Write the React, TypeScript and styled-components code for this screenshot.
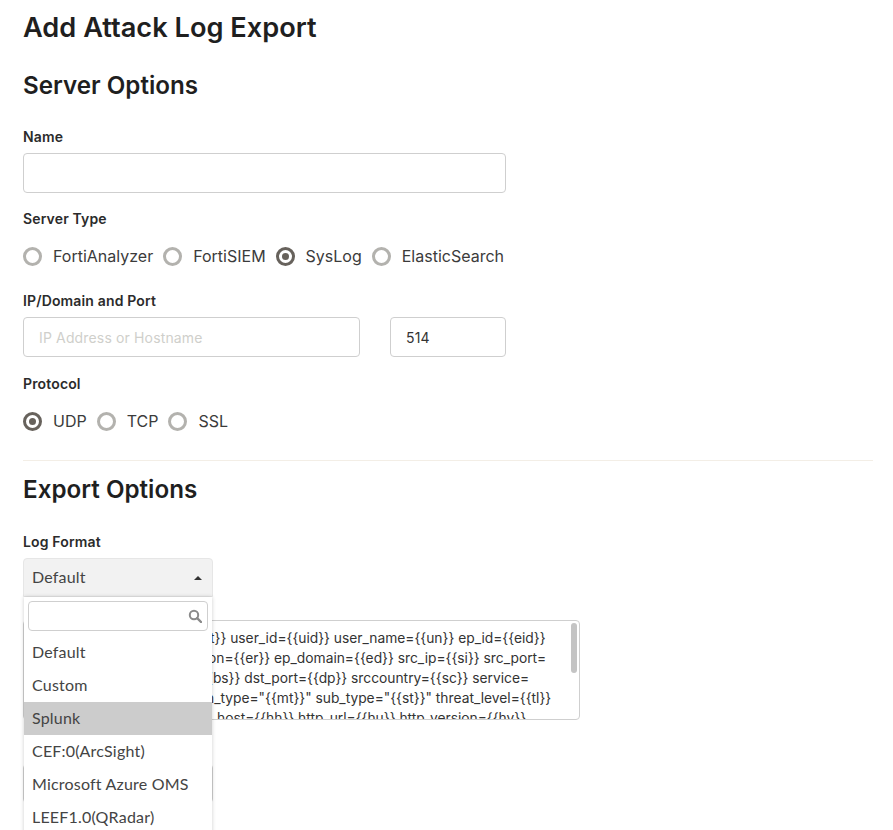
import React from 'react';
import styled, { createGlobalStyle } from 'styled-components';

const GlobalStyle = createGlobalStyle`
  html, body {
    margin: 0;
    padding: 0;
    height: 830px;
    overflow: hidden;
    background: #fff;
  }
  body {
    font-family: Inter, "Liberation Sans", sans-serif;
    color: #1f1f1f;
  }
`;

const Page = styled.main`
  padding: 10px 20px 0 23px;
`;

const Title = styled.h1`
  margin: 0;
  font-size: 27.2px;
  line-height: 36px;
  font-weight: 600;
  color: #1f1f1f;
`;

const SectionTitle = styled.h2<{ $top: number }>`
  margin: ${(p) => p.$top}px 0 0;
  font-size: 24.2px;
  line-height: 32px;
  font-weight: 600;
  color: #1f1f1f;
`;

const Label = styled.label<{ $top: number }>`
  display: block;
  margin-top: ${(p) => p.$top}px;
  font-size: 14px;
  line-height: 20px;
  font-weight: 600;
  letter-spacing: 0.15px;
  color: #2b2b2b;
`;

const TextInput = styled.input<{ $width: number }>`
  display: block;
  box-sizing: border-box;
  width: ${(p) => p.$width}px;
  height: 40px;
  padding: 0 15px;
  border: 1px solid #cfcfcf;
  border-radius: 4px;
  outline: none;
  background: #fff;
  font: 400 14px Inter, sans-serif;
  letter-spacing: 0.15px;
  color: #333;

  &::placeholder {
    color: #cfcfcb;
    opacity: 1;
  }
`;

const FieldSlot = styled.div`
  margin-top: 6px;
`;

const InputRow = styled(FieldSlot)`
  display: flex;
  gap: 30px;
`;

const RadioGroup = styled.div`
  display: flex;
  align-items: center;
  gap: 10px;
  margin-top: 17px;
`;

const RadioItem = styled.span`
  display: flex;
  align-items: center;
  gap: 11px;
  font-size: 16px;
  line-height: 20px;
  color: #3b3b3b;
`;

const RadioMark = styled.i<{ $checked?: boolean }>`
  box-sizing: border-box;
  display: grid;
  place-items: center;
  width: 19px;
  height: 19px;
  border-radius: 50%;
  border: 3px solid ${(p) => (p.$checked ? '#67625c' : '#b3b2ae')};

  &::after {
    content: '';
    display: ${(p) => (p.$checked ? 'block' : 'none')};
    width: 7px;
    height: 7px;
    border-radius: 50%;
    background: #67625c;
  }
`;

const Divider = styled.hr`
  margin: 29px 0 0;
  border: 0;
  border-top: 1px solid #f3eee6;
`;

const SelectWrap = styled.div`
  position: relative;
  width: 190px;
  margin-top: 6px;
`;

const SelectBox = styled.div`
  box-sizing: border-box;
  display: flex;
  align-items: center;
  justify-content: space-between;
  height: 39px;
  padding: 0 10px 2px 8px;
  border: 1px solid #e6e6e6;
  border-radius: 4px 4px 0 0;
  background: #f2f2f2;
  font: 400 16px Lato, sans-serif;
  letter-spacing: 0.2px;
  color: #444;
`;

const Caret = styled.i`
  width: 0;
  height: 0;
  margin-top: 2px;
  border-left: 4px solid transparent;
  border-right: 4px solid transparent;
  border-bottom: 4px solid #333;
`;

const Dropdown = styled.div`
  position: absolute;
  z-index: 2;
  top: 39px;
  left: 1px;
  width: 188px;
  height: 240px;
  overflow: hidden;
  background: #fff;
  box-shadow: 0 0 4px rgba(0, 0, 0, 0.2);
`;

const SearchBox = styled.div`
  box-sizing: border-box;
  display: flex;
  align-items: center;
  justify-content: flex-end;
  height: 30px;
  margin: 4px 4px 5px;
  padding-right: 5px;
  border: 1px solid #cfcfcf;
  border-radius: 4px;
  color: #8a8a8a;
`;

const Option = styled.div<{ $active?: boolean }>`
  box-sizing: border-box;
  height: 33px;
  padding: 0 8px 2px;
  display: flex;
  align-items: center;
  font: 400 16px Lato, sans-serif;
  letter-spacing: 0.2px;
  color: #444;
  background: ${(p) => (p.$active ? '#cccccc' : 'transparent')};
`;

const FormatBox = styled.div`
  box-sizing: border-box;
  position: relative;
  width: 557px;
  height: 100px;
  margin-top: 23px;
  padding-top: 7px;
  overflow: hidden;
  border: 1px solid #cfcfcf;
  border-radius: 4px;
  font-size: 13.8px;
  line-height: 20px;
  color: #333;
`;

const FormatLine = styled.div<{ $indent: number }>`
  padding-left: ${(p) => p.$indent}px;
  white-space: nowrap;
`;

const Thumb = styled.i`
  position: absolute;
  top: 2px;
  right: 2px;
  width: 6px;
  height: 50px;
  border-radius: 3px;
  background: #c4c4c4;
`;

const NextSelect = styled.div`
  box-sizing: border-box;
  width: 190px;
  height: 39px;
  margin-top: 44px;
  border: 1px solid #cfcfcf;
  border-radius: 4px;
`;

const SearchIcon = () => (
  <svg width="14" height="14" viewBox="0 0 14 14" fill="none" stroke="currentColor" aria-hidden>
    <circle cx="6" cy="6" r="4.2" strokeWidth="2" />
    <path d="M9.2 9.2 13 13" strokeWidth="2.4" strokeLinecap="round" />
  </svg>
);

const serverTypes = ['FortiAnalyzer', 'FortiSIEM', 'SysLog', 'ElasticSearch'];
const protocols = ['UDP', 'TCP', 'SSL'];
const formats = ['Default', 'Custom', 'Splunk', 'CEF:0(ArcSight)', 'Microsoft Azure OMS', 'LEEF1.0(QRadar)'];
const formatLines = [
  { indent: 186, text: 't}} user_id={{uid}} user_name={{un}} ep_id={{eid}}' },
  { indent: 184, text: 'on={{er}} ep_domain={{ed}} src_ip={{si}} src_port=' },
  { indent: 183, text: '{bs}} dst_port={{dp}} srccountry={{sc}} service=' },
  { indent: 182, text: 'n_type="{{mt}}" sub_type="{{st}}" threat_level={{tl}}' },
  { indent: 193, text: 'host={{hh}} http_url={{hu}} http_version={{hv}}' },
];

const App: React.FC = () => {
  return (
    <Page>
      <GlobalStyle />
      <Title>Add Attack Log Export</Title>

      <SectionTitle $top={24}>Server Options</SectionTitle>
      <Label $top={25}>Name</Label>
      <FieldSlot>
        <TextInput $width={483} />
      </FieldSlot>

      <Label $top={16}>Server Type</Label>
      <RadioGroup>
        {serverTypes.map((name) => (
          <RadioItem key={name}>
            <RadioMark $checked={name === 'SysLog'} />
            {name}
          </RadioItem>
        ))}
      </RadioGroup>

      <Label $top={25}>IP/Domain and Port</Label>
      <InputRow>
        <TextInput $width={337} placeholder="IP Address or Hostname" />
        <TextInput $width={116} defaultValue="514" />
      </InputRow>

      <Label $top={17}>Protocol</Label>
      <RadioGroup>
        {protocols.map((name) => (
          <RadioItem key={name}>
            <RadioMark $checked={name === 'UDP'} />
            {name}
          </RadioItem>
        ))}
      </RadioGroup>

      <Divider />

      <SectionTitle $top={13}>Export Options</SectionTitle>
      <Label $top={26}>Log Format</Label>
      <SelectWrap>
        <SelectBox>
          Default
          <Caret />
        </SelectBox>
        <Dropdown>
          <SearchBox>
            <SearchIcon />
          </SearchBox>
          {formats.map((name) => (
            <Option key={name} $active={name === 'Splunk'}>
              {name}
            </Option>
          ))}
        </Dropdown>
      </SelectWrap>

      <FormatBox>
        {formatLines.map((line) => (
          <FormatLine key={line.text} $indent={line.indent}>
            {line.text}
          </FormatLine>
        ))}
        <Thumb />
      </FormatBox>
      <NextSelect />
    </Page>
  );
};

export default App;
